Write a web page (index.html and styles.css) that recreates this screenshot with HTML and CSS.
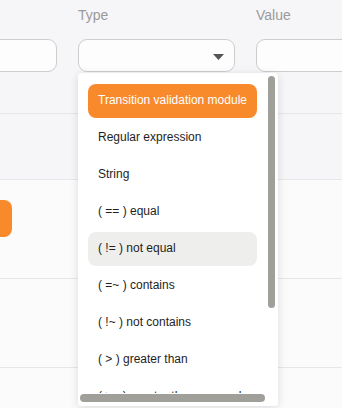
FILE: index.html
```html
<!DOCTYPE html>
<html>
<head>
<meta charset="utf-8">
<link rel="stylesheet" href="styles.css">
</head>
<body>
<div class="page">
  <div class="filters">
    <div class="field">
      <div class="label"></div>
      <div class="input"></div>
    </div>
    <div class="field type">
      <div class="label">Type</div>
      <div class="input select">
        <svg class="caret" width="11" height="6" viewBox="0 0 11 6"><path d="M0 0 H11 L5.5 6 Z" fill="#555"/></svg>
      </div>
      <div class="menu">
        <ul class="options">
          <li class="option selected">Transition validation module</li>
          <li class="option">Regular expression</li>
          <li class="option">String</li>
          <li class="option">( == ) equal</li>
          <li class="option hover">( != ) not equal</li>
          <li class="option">( =~ ) contains</li>
          <li class="option">( !~ ) not contains</li>
          <li class="option">( &gt; ) greater than</li>
          <li class="option">( &gt;= ) greater than or equal</li>
        </ul>
        <div class="vbar"></div>
        <div class="htrack"><div class="hbar"></div></div>
      </div>
    </div>
    <div class="field">
      <div class="label">Value</div>
      <div class="input"></div>
    </div>
  </div>
  <div class="row r1"></div>
  <div class="row r2"><div class="btn"></div></div>
  <div class="row r3"></div>
  <div class="row r4"></div>
</div>
</body>
</html>
```
FILE: styles.css
```css
html, body {
  margin: 0;
  padding: 0;
}
body {
  width: 342px;
  height: 408px;
  overflow: hidden;
  background: #fbfbfc;
  font-family: "Liberation Sans", Arial, sans-serif;
}
.page {
  width: 342px;
  height: 408px;
  overflow: hidden;
}
.filters {
  display: flex;
  gap: 21px;
  margin-left: -100px;
  padding-top: 5px;
  box-sizing: border-box;
  height: 113px;
  background: #f6f6f9;
}
.field {
  width: 157px;
  flex: none;
  display: flex;
  flex-direction: column;
  gap: 14px;
}
.type {
  position: relative;
  z-index: 5;
}
.label {
  height: 20px;
  font-size: 14px;
  line-height: 20px;
  color: #9a9a9a;
}
.input {
  height: 33px;
  box-sizing: border-box;
  border: 1px solid #cdcdcd;
  border-radius: 9px;
  background: #fdfdfd;
}
.select {
  display: flex;
  align-items: center;
  justify-content: flex-end;
  padding-right: 10px;
  padding-top: 2px;
}
.menu {
  position: absolute;
  top: 68px;
  left: 0;
  width: 200px;
  height: 333px;
  background: #fff;
  border-radius: 4px;
  box-shadow: 0 2px 10px rgba(0, 0, 0, 0.13);
  overflow: hidden;
}
.options {
  list-style: none;
  margin: 0;
  padding: 11px 21px 0 10px;
  display: flex;
  flex-direction: column;
  gap: 3px;
}
.option {
  height: 34px;
  line-height: 32px;
  padding: 0 10px;
  border-radius: 8px;
  font-size: 12px;
  color: #1e1e1e;
  white-space: nowrap;
}
.option.selected {
  background: #f98a2c;
  color: #fff;
}
.option.hover {
  background: #eeeeec;
}
.vbar {
  position: absolute;
  left: 190px;
  top: 3px;
  width: 7px;
  height: 232px;
  border-radius: 4px;
  background: #a19f9a;
}
.htrack {
  position: absolute;
  left: 0;
  right: 0;
  top: 320px;
  bottom: 0;
  background: #fff;
  padding: 1px 0 0 2px;
}
.hbar {
  width: 185px;
  height: 8px;
  border-radius: 4px;
  background: #a19f9a;
}
.row {
  border-top: 1px solid #e7e7ea;
  box-sizing: border-box;
}
.r1 {
  height: 66px;
  background: #f6f6f9;
}
.r2 {
  height: 99px;
  padding-top: 20px;
}
.r3 {
  height: 89px;
}
.r4 {
  height: 60px;
}
.btn {
  width: 60px;
  height: 37px;
  margin-left: -48px;
  border-radius: 8px;
  background: #f98a2c;
}
```
